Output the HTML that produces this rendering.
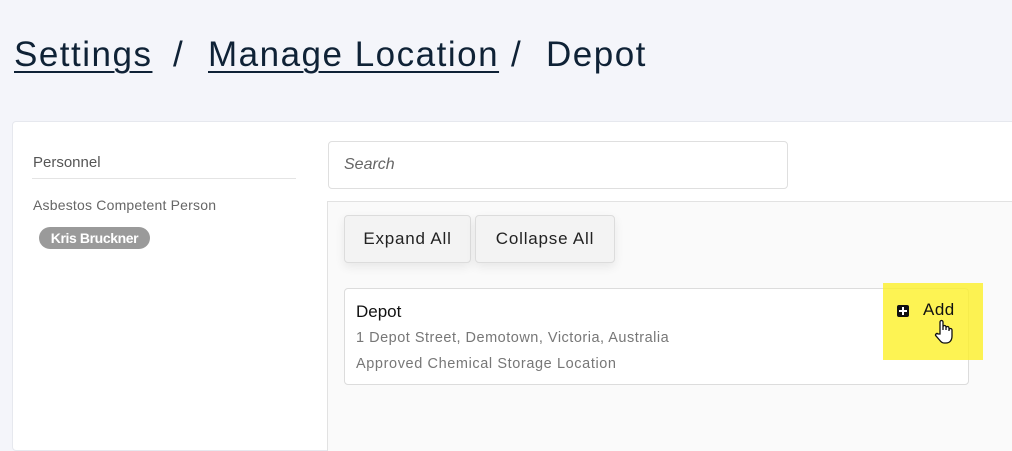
<!DOCTYPE html>
<html><head><meta charset="utf-8"><style>
*{margin:0;padding:0;box-sizing:border-box}
body{width:1012px;height:438px;overflow:hidden;background:#f4f5fa;font-family:"Liberation Sans",sans-serif;position:relative}
.a{position:absolute;white-space:nowrap}
.h{font-size:35px;color:#0f2236;top:35px;letter-spacing:1.5px}
.h u{text-decoration-thickness:2px;text-underline-offset:5px}
.card{position:absolute;left:12px;top:121px;width:1010px;height:330px;background:#fff;border:1px solid #e6e8ee;border-radius:4px}
.panel{position:absolute;left:327px;top:201px;width:700px;height:250px;background:#fafafa;border-top:1px solid #e2e2e2;border-left:1px solid #e2e2e2}
.btn{position:absolute;top:215px;height:48px;background:#f3f3f3;border:1px solid #dcdcdc;border-radius:4px;font-size:17px;color:#222;line-height:46px;text-align:center;letter-spacing:.8px;box-shadow:0 4px 10px rgba(0,0,0,.08)}
</style></head><body>
<div class="a h" style="left:14px"><u>Settings</u></div>
<div class="a h" style="left:173px">/</div>
<div class="a h" style="left:208px"><u>Manage Location</u></div>
<div class="a h" style="left:511px">/</div>
<div class="a h" style="left:546px">Depot</div>

<div class="card"></div>
<div class="a" style="left:33px;top:154px;font-size:15px;color:#555">Personnel</div>
<div class="a" style="left:32px;top:178px;width:264px;height:1px;background:#e4e4e4"></div>
<div class="a" style="left:33px;top:197px;font-size:14px;color:#666;letter-spacing:.2px">Asbestos Competent Person</div>
<div class="a" style="left:39px;top:227px;height:22px;width:111px;background:#9a9a9a;border-radius:11px;color:#fff;font-size:14px;font-weight:bold;line-height:22px;text-align:center;letter-spacing:-.4px">Kris Bruckner</div>

<div class="a" style="left:328px;top:141px;width:460px;height:48px;border:1px solid #dfdfdf;border-radius:4px;background:#fff"></div>
<div class="a" style="left:344px;top:156px;font-size:16px;color:#666;font-style:italic">Search</div>

<div class="panel"></div>
<div class="btn" style="left:344px;width:127px">Expand All</div>
<div class="btn" style="left:475px;width:140px">Collapse All</div>

<div class="a" style="left:344px;top:288px;width:625px;height:97px;background:#fff;border:1px solid #dcdcdc;border-radius:4px"></div>
<div class="a" style="left:356px;top:302px;font-size:17px;color:#111">Depot</div>
<div class="a" style="left:356px;top:330px;font-size:14.5px;color:#777;letter-spacing:.5px">1 Depot Street, Demotown, Victoria, Australia</div>
<div class="a" style="left:356px;top:356px;font-size:14.5px;color:#777;letter-spacing:.6px">Approved Chemical Storage Location</div>

<div class="a" style="left:883px;top:283px;width:100px;height:77px;background:rgba(253,240,40,.8)"></div>
<div class="a" style="left:897px;top:305px;width:12px;height:12px;background:#111;border-radius:2px"></div>
<div class="a" style="left:902px;top:307px;width:2px;height:8px;background:#fff"></div>
<div class="a" style="left:899px;top:310px;width:8px;height:2px;background:#fff"></div>
<div class="a" style="left:923px;top:300px;font-size:17px;color:#111;letter-spacing:.5px">Add</div>
<svg class="a" style="left:934px;top:319px" width="22" height="26" viewBox="0 0 22 26"><path d="M6 15V3a1.5 1.5 0 0 1 3 0v8V8a1.5 1.5 0 0 1 3 0v3V9a1.5 1.5 0 0 1 3 0v3-1a1.5 1.5 0 0 1 3 0v6c0 4-2 7-6 7h-2c-2 0-3-1-4.5-3L2 17a1.4 1.4 0 0 1 2-2z" fill="#fff" stroke="#111" stroke-width="1.3"/></svg>
</body></html>
